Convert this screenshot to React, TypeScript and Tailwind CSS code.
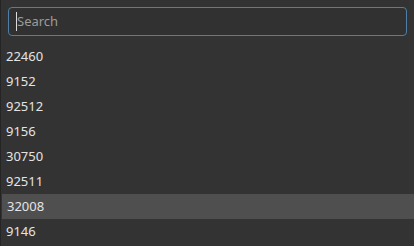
const items = ["22460", "9152", "92512", "9156", "30750", "92511", "32008", "9146"];

export default function App() {
  return (
    <div
      className="flex h-[246px] w-[414px] flex-col overflow-hidden border-l border-[#252525] bg-[#333333]"
      style={{ fontFamily: '"Noto Sans", "Open Sans", sans-serif' }}
    >
      <div className="mx-[7px] mt-[7px] flex h-[29px] items-center rounded-[4px] border border-[#4f7fa6] bg-[#313131] pl-[7px]">
        <span className="h-[19px] w-px bg-[#dcdcdc]" />
        <span className="pt-px text-[13px] text-[#9c9c9c]">Search</span>
      </div>
      <ul className="mt-[8px] flex flex-col">
        {items.map((item, i) => (
          <li
            key={item}
            className={`flex h-[25px] items-center pl-[5px] text-[13px] text-[#e4e4e4] ${
              i === 6 ? "ml-px bg-[#4f4f4f] pl-[4px]" : ""
            }`}
          >
            {item}
          </li>
        ))}
      </ul>
    </div>
  );
}
